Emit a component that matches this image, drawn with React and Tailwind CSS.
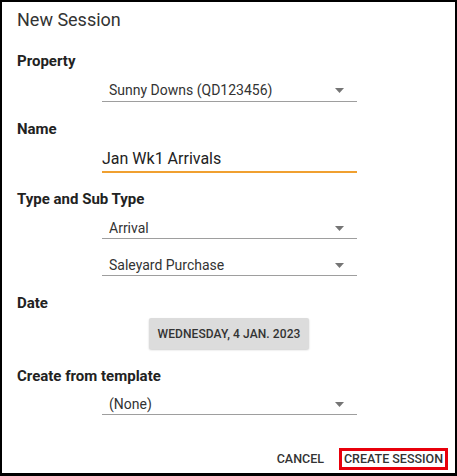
import React from 'react';

const Arrow = () => (
  <svg width="9" height="5" viewBox="0 0 9 5" className="shrink-0">
    <path d="M0 0h9L4.5 5z" fill="#757575" />
  </svg>
);

const Select = ({ value, className = '' }) => (
  <div className={`ml-[85px] w-[255px] flex items-center justify-between border-b border-[#9e9e9e] pl-[7px] pr-[13px] ${className}`}>
    <span className="text-[14px] leading-[20px] text-[#333]">{value}</span>
    <Arrow />
  </div>
);

const Label = ({ children, className = '' }) => (
  <div className={`text-[15px] leading-[20px] font-bold text-[#222] ${className}`}>{children}</div>
);

export default function App() {
  return (
    <div
      className="w-[457px] h-[476px] bg-white border-2 border-b-[3px] border-black flex flex-col pl-[15px]"
      style={{ fontFamily: 'Roboto, "Liberation Sans", sans-serif' }}
    >
      <div className="mt-[6px] text-[18px] leading-[24px] text-[#333]">New Session</div>

      <Label className="mt-[19px]">Property</Label>
      <Select value="Sunny Downs (QD123456)" className="mt-[9px] pb-[1px]" />

      <Label className="mt-[17px]">Name</Label>
      <div className="mt-[8px] ml-[85px] w-[255px] border-b-2 border-[#f0a030]">
        <span className="text-[16px] leading-[22px] text-[#222]">Jan Wk1 Arrivals</span>
      </div>

      <Label className="mt-[16px]">Type and Sub Type</Label>
      <Select value="Arrival" className="mt-[9px]" />
      <Select value="Saleyard Purchase" className="mt-[16px]" />

      <Label className="mt-[17px]">Date</Label>
      <div className="mt-[5px] ml-[132px]">
        <button className="w-[160px] h-[31px] bg-[#dcdcdc] rounded-[2px] shadow-[0_1px_2px_rgba(0,0,0,0.2)] text-[12px] font-medium text-[#333] tracking-[0.1px]">
          WEDNESDAY, 4 JAN. 2023
        </button>
      </div>

      <Label className="mt-[17px]">Create from template</Label>
      <Select value="(None)" className="mt-[8px]" />

      <div className="mt-auto mb-[3px] mr-[7px] flex items-center justify-end gap-[15px]">
        <span className="text-[12.5px] font-medium text-[#333] whitespace-nowrap">CANCEL</span>
        <span className="border-[3px] border-[#e8000b] h-[22px] w-[109px] flex items-center justify-center text-[12.5px] font-medium text-[#333] whitespace-nowrap">
          CREATE SESSION
        </span>
      </div>
    </div>
  );
}
